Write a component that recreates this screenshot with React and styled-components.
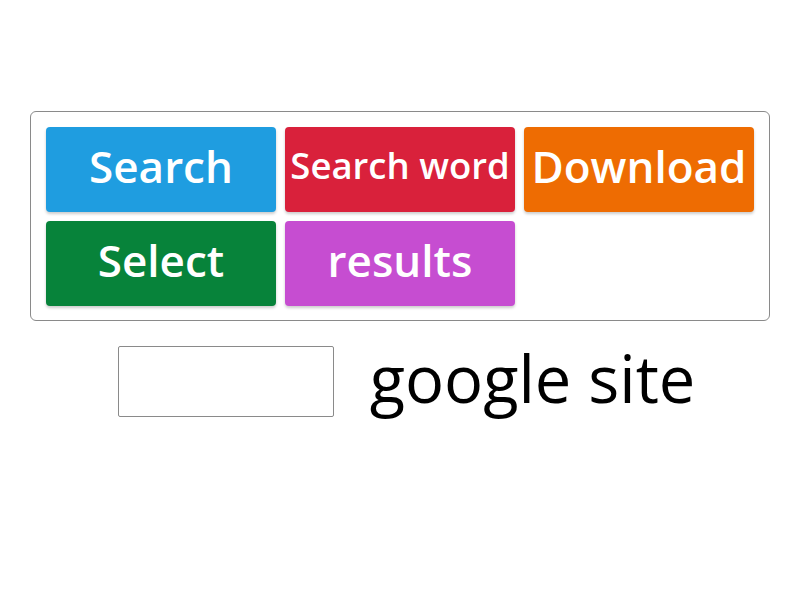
import React from "react"
import styled, { createGlobalStyle } from "styled-components"

const Global = createGlobalStyle`
    html, body {
        margin: 0;
        padding: 0;
        background: #fff;
        font-family: "Open Sans", "Liberation Sans", sans-serif;
    }
`

const Page = styled.div`
    width: 800px;
    height: 600px;
    display: flex;
    flex-direction: column;
    align-items: center;
    padding-top: 111px;
    box-sizing: border-box;
`

const Board = styled.div`
    width: 740px;
    box-sizing: border-box;
    border: 1px solid #8a8a8a;
    border-radius: 6px;
    padding: 15px 15px 14px 15px;
    display: grid;
    grid-template-columns: repeat(3, 230px);
    grid-auto-rows: 85px;
    gap: 9px;
`

const Tile = styled.div`
    background: ${(p) => p.bg};
    border-radius: 4px;
    box-shadow: 0 2px 3px rgba(0, 0, 0, 0.2);
    color: #fff;
    display: flex;
    align-items: center;
    justify-content: center;
    font-weight: 600;
    font-size: ${(p) => p.size || 44}px;
    line-height: 1;
    padding-bottom: 8px;
    box-sizing: border-box;
    white-space: nowrap;
    overflow: hidden;
`

const Sentence = styled.div`
    display: flex;
    align-items: center;
    gap: 36px;
    margin-top: 25px;
    margin-left: 13px;
`

const Blank = styled.div`
    width: 214px;
    height: 69px;
    border: 1px solid #8a8a8a;
    border-radius: 2px;
`

const Words = styled.span`
    font-size: 65px;
    color: #000;
    line-height: 1;
    padding-bottom: 6px;
`

const tiles = [
    { text: "Search", bg: "#1f9de0" },
    { text: "Search word", bg: "#d9213b", size: 36.5 },
    { text: "Download", bg: "#ee6c02" },
    { text: "Select", bg: "#07833a" },
    { text: "results", bg: "#c64dd1" },
]

const App = () => (
    <>
        <Global />
        <Page>
            <Board>
                {tiles.map((t) => (
                    <Tile key={t.text} bg={t.bg} size={t.size}>
                        {t.text}
                    </Tile>
                ))}
            </Board>
            <Sentence>
                <Blank />
                <Words>google site</Words>
            </Sentence>
        </Page>
    </>
)

export default App
